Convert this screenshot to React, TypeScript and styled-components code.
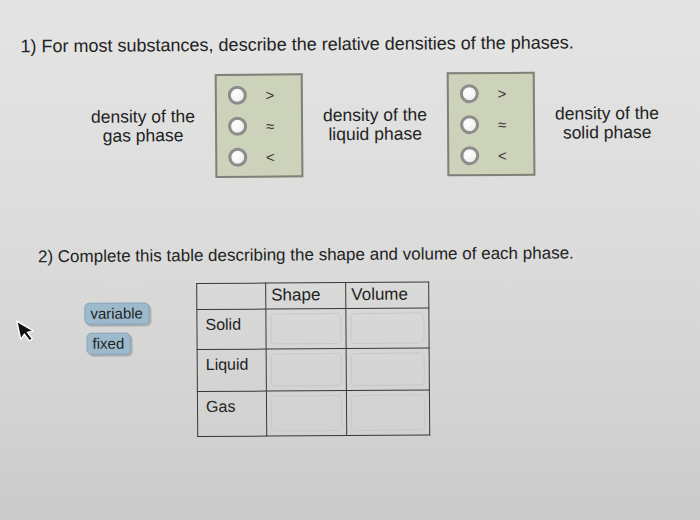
import React from "react";
import styled, { createGlobalStyle } from "styled-components";

const Global = createGlobalStyle`
  html, body { margin: 0; padding: 0; }
  body {
    width: 700px;
    height: 520px;
    overflow: hidden;
    font-family: "Liberation Sans", Arial, sans-serif;
    background:
      repeating-linear-gradient(95deg, rgba(170, 215, 170, 0.10) 0px, rgba(170, 215, 170, 0.10) 2px, rgba(215, 175, 215, 0.10) 2px, rgba(215, 175, 215, 0.10) 4px),
      linear-gradient(180deg, #e8e8e7 0%, #e0e0df 40%, #d4d4d3 80%, #cbcbca 100%);
  }
`;

const Page = styled.div`
  position: relative;
  width: 700px;
  height: 520px;
  box-sizing: border-box;
  padding: 34px 0 0 22px;
  color: #232323;
  transform: rotate(-0.4deg);
  transform-origin: 50% 50%;
`;

const Title = styled.div<{ $indent?: number; $size?: number }>`
  font-size: ${(p) => p.$size ?? 17}px;
  line-height: 20px;
  margin-left: ${(p) => p.$indent ?? 0}px;
  white-space: nowrap;
`;

const DensityRow = styled.div`
  display: flex;
  align-items: center;
  gap: 16px;
  margin-top: 19px;
  padding-left: 66px;
`;

const PhaseLabel = styled.div`
  width: 112px;
  text-align: center;
  font-size: 17.5px;
  line-height: 19px;
  white-space: nowrap;
`;

const ChoiceBox = styled.div`
  width: 88px;
  height: 104px;
  box-sizing: border-box;
  background: #cdd2ba;
  border: 2px solid #7e8079;
  display: flex;
  flex-direction: column;
  justify-content: center;
  gap: 12px;
  padding-left: 11px;
`;

const Choice = styled.div`
  display: flex;
  align-items: center;
  gap: 16px;
  height: 19px;
`;

const Radio = styled.div`
  width: 13px;
  height: 13px;
  border-radius: 50%;
  border: 3px solid #8b8d8a;
  background: radial-gradient(circle at 40% 35%, #ffffff 0%, #f2f2f0 60%, #dcdcda 100%);
`;

const Symbol = styled.span`
  font-size: 15px;
  line-height: 19px;
  color: #333;
  width: 14px;
  text-align: center;
`;

const TableArea = styled.div`
  display: flex;
  align-items: flex-start;
  margin-top: 17px;
  padding-left: 62px;
`;

const ChipColumn = styled.div`
  width: 112px;
  display: flex;
  flex-direction: column;
  align-items: flex-start;
  gap: 8px;
  padding-top: 19px;
`;

const Chip = styled.div<{ $shift?: number }>`
  font-size: 15px;
  line-height: 20px;
  padding: 0 5px;
  margin-left: ${(p) => p.$shift ?? 0}px;
  background: #9dbacd;
  border: 1px solid #86a4b8;
  border-radius: 5px;
  box-shadow: 2px 2px 0 #a9afb3;
  color: #222;
`;

const Grid = styled.table`
  border-collapse: collapse;
  table-layout: fixed;
  font-size: 16px;
  td {
    box-sizing: border-box;
    border: 1.5px solid #383838;
    padding: 0;
    vertical-align: top;
  }
`;

const Row = styled.tr<{ $h: number }>`
  height: ${(p) => p.$h}px;
`;

const HeadCell = styled.td<{ $w: number }>`
  width: ${(p) => p.$w}px;
  text-align: left;
  padding-left: 5px !important;
  line-height: 24px;
  font-size: 17px;
`;

const RowLabel = styled.td`
  padding: 6px 0 0 8px !important;
`;

const DropCell = styled.td`
  padding: 4px 4px !important;
`;

const DropZone = styled.div<{ $h: number }>`
  height: ${(p) => p.$h}px;
  border: 1px solid #c0cacd;
  border-radius: 5px;
`;

const Cursor = styled.svg`
  position: absolute;
  left: 15px;
  top: 314px;
  transform: rotate(-12deg);
`;

export default function App() {
  const rows: [string, number][] = [
    ["Solid", 39],
    ["Liquid", 41],
    ["Gas", 44],
  ];
  return (
    <>
      <Global />
      <Page>
        <Title $size={18}>1) For most substances, describe the relative densities of the phases.</Title>
        <DensityRow>
          <PhaseLabel>density of the<br />gas phase</PhaseLabel>
          <ChoiceBox>
            <Choice><Radio /><Symbol>&gt;</Symbol></Choice>
            <Choice><Radio /><Symbol>≈</Symbol></Choice>
            <Choice><Radio /><Symbol>&lt;</Symbol></Choice>
          </ChoiceBox>
          <PhaseLabel>density of the<br />liquid phase</PhaseLabel>
          <ChoiceBox>
            <Choice><Radio /><Symbol>&gt;</Symbol></Choice>
            <Choice><Radio /><Symbol>≈</Symbol></Choice>
            <Choice><Radio /><Symbol>&lt;</Symbol></Choice>
          </ChoiceBox>
          <PhaseLabel>density of the<br />solid phase</PhaseLabel>
        </DensityRow>
        <Title $indent={16} style={{ marginTop: 68 }}>
          2) Complete this table describing the shape and volume of each phase.
        </Title>
        <TableArea>
          <ChipColumn>
            <Chip>variable</Chip>
            <Chip $shift={2}>fixed</Chip>
          </ChipColumn>
          <Grid>
            <tbody>
              <Row $h={26}>
                <HeadCell $w={69}></HeadCell>
                <HeadCell $w={80}>Shape</HeadCell>
                <HeadCell $w={83}>Volume</HeadCell>
              </Row>
              {rows.map(([name, h]) => (
                <Row key={name} $h={h}>
                  <RowLabel>{name}</RowLabel>
                  <DropCell><DropZone $h={h - 10} /></DropCell>
                  <DropCell><DropZone $h={h - 10} /></DropCell>
                </Row>
              ))}
            </tbody>
          </Grid>
        </TableArea>
        <Cursor width="28" height="28" viewBox="0 0 24 24">
          <path d="M3 2 L3 18 L7 14.3 L10 21 L12.8 19.8 L9.9 13.4 L15.2 13.2 Z" fill="#111" stroke="#fff" strokeWidth="1.2" strokeLinejoin="round" />
        </Cursor>
      </Page>
    </>
  );
}
